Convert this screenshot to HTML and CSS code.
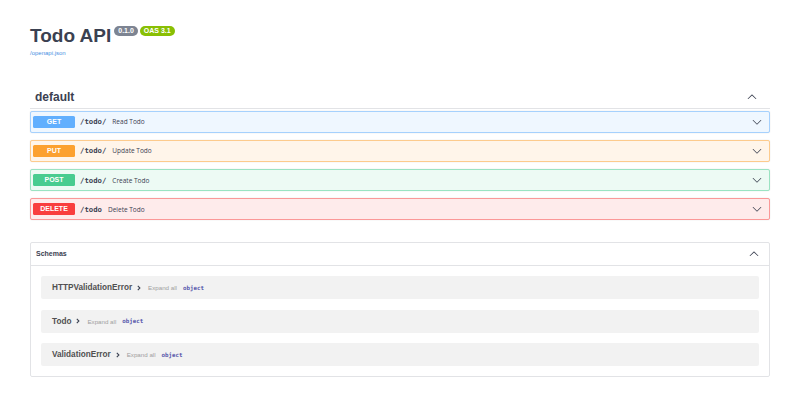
FILE: index.html
```html
<!DOCTYPE html>
<html>
<head>
<meta charset="utf-8">
<link rel="stylesheet" href="styles.css">
</head>
<body>
<div class="wrap">
  <div class="info">
    <div class="title-row">
      <h1 class="title">Todo API</h1>
      <span class="badge ver">0.1.0</span>
      <span class="badge oas">OAS 3.1</span>
    </div>
    <a class="link">/openapi.json</a>
  </div>

  <div class="tag">
    <h3 class="tag-name">default</h3>
    <svg class="chev-up" viewBox="0 0 20 20"><path d="M17.418 6.109c.272-.268.709-.268.979 0s.271.701 0 .969l-7.908 7.83c-.27.268-.707.268-.979 0l-7.908-7.83c-.27-.268-.27-.701 0-.969.271-.268.709-.268.979 0L10 13.25l7.418-7.141z" transform="rotate(180 10 10)"/></svg>
  </div>

  <div class="ops">
    <div class="op get"><span class="method">GET</span><span class="path">/todo/</span><span class="summary">Read Todo</span><svg class="chev" viewBox="0 0 20 20"><path d="M17.418 6.109c.272-.268.709-.268.979 0s.271.701 0 .969l-7.908 7.83c-.27.268-.707.268-.979 0l-7.908-7.83c-.27-.268-.27-.701 0-.969.271-.268.709-.268.979 0L10 13.25l7.418-7.141z"/></svg></div>
    <div class="op put"><span class="method">PUT</span><span class="path">/todo/</span><span class="summary">Update Todo</span><svg class="chev" viewBox="0 0 20 20"><path d="M17.418 6.109c.272-.268.709-.268.979 0s.271.701 0 .969l-7.908 7.83c-.27.268-.707.268-.979 0l-7.908-7.83c-.27-.268-.27-.701 0-.969.271-.268.709-.268.979 0L10 13.25l7.418-7.141z"/></svg></div>
    <div class="op post"><span class="method">POST</span><span class="path">/todo/</span><span class="summary">Create Todo</span><svg class="chev" viewBox="0 0 20 20"><path d="M17.418 6.109c.272-.268.709-.268.979 0s.271.701 0 .969l-7.908 7.83c-.27.268-.707.268-.979 0l-7.908-7.83c-.27-.268-.27-.701 0-.969.271-.268.709-.268.979 0L10 13.25l7.418-7.141z"/></svg></div>
    <div class="op delete"><span class="method">DELETE</span><span class="path">/todo</span><span class="summary">Delete Todo</span><svg class="chev" viewBox="0 0 20 20"><path d="M17.418 6.109c.272-.268.709-.268.979 0s.271.701 0 .969l-7.908 7.83c-.27.268-.707.268-.979 0l-7.908-7.83c-.27-.268-.27-.701 0-.969.271-.268.709-.268.979 0L10 13.25l7.418-7.141z"/></svg></div>
  </div>

  <section class="models">
    <div class="models-head">
      <h4 class="models-title">Schemas</h4>
      <svg class="chev-up" viewBox="0 0 20 20"><path d="M17.418 6.109c.272-.268.709-.268.979 0s.271.701 0 .969l-7.908 7.83c-.27.268-.707.268-.979 0l-7.908-7.83c-.27-.268-.27-.701 0-.969.271-.268.709-.268.979 0L10 13.25l7.418-7.141z" transform="rotate(180 10 10)"/></svg>
    </div>
    <div class="model"><span class="model-name">HTTPValidationError</span><svg class="mchev" viewBox="0 0 6 10"><path d="M1 1.5 L4.5 5 L1 8.5" /></svg><span class="expand">Expand all</span><span class="type">object</span></div>
    <div class="model"><span class="model-name">Todo</span><svg class="mchev" viewBox="0 0 6 10"><path d="M1 1.5 L4.5 5 L1 8.5" /></svg><span class="expand">Expand all</span><span class="type">object</span></div>
    <div class="model"><span class="model-name">ValidationError</span><svg class="mchev" viewBox="0 0 6 10"><path d="M1 1.5 L4.5 5 L1 8.5" /></svg><span class="expand">Expand all</span><span class="type">object</span></div>
  </section>
</div>
</body>
</html>
```

FILE: styles.css
```css
html, body {
  margin: 0;
  padding: 0;
  background: #fff;
}
body {
  font-family: "Liberation Sans", Arial, sans-serif;
  color: #3b4151;
}
.wrap {
  padding: 24px 30px 0;
}
.title-row {
  display: flex;
  align-items: flex-start;
}
.title {
  margin: 0;
  font-size: 19px;
  line-height: 23px;
  font-weight: bold;
  color: #3b4151;
}
.badge {
  display: inline-block;
  margin-top: 2px;
  height: 10px;
  line-height: 10px;
  padding: 0 4px;
  border-radius: 5px;
  color: #fff;
  font-size: 7px;
  font-weight: bold;
}
.ver {
  margin-left: 3px;
  background: #7d8492;
}
.oas {
  margin-left: 2px;
  background: #89bf04;
}
.link {
  display: block;
  margin-top: 2px;
  font-size: 6px;
  line-height: 8px;
  color: #4990e2;
}
.tag {
  display: flex;
  align-items: center;
  justify-content: space-between;
  margin-top: 26px;
  padding: 5px 13px 2px 5px;
  border-bottom: 1px solid #e2e3e6;
  margin-bottom: 1.5px;
}
.tag-name {
  margin: 0;
  font-size: 12px;
  line-height: 18px;
  font-weight: bold;
  color: #3b4151;
}
.chev-up {
  width: 10px;
  height: 10px;
  fill: #3b4151;
}
.op {
  display: flex;
  align-items: center;
  box-sizing: border-box;
  height: 22px;
  border: 1px solid;
  border-radius: 2px;
  padding: 0 7px 0 2px;
  margin-bottom: 7.3px;
  box-shadow: 0 0 1.5px rgba(0, 0, 0, .12);
}
.method {
  width: 42px;
  height: 12px;
  line-height: 12px;
  text-align: center;
  border-radius: 1.5px;
  color: #fff;
  font-size: 7px;
  font-weight: bold;
}
.path {
  margin-left: 5px;
  font-family: "DejaVu Sans Mono", monospace;
  font-weight: bold;
  font-size: 7.3px;
  color: #3b4151;
}
.summary {
  flex: 1;
  margin-left: 6px;
  font-family: "Open Sans", sans-serif;
  font-size: 6.5px;
  color: #3b4151;
}
.chev {
  width: 10px;
  height: 10px;
  fill: #3b4151;
}
.get { background: #eff7ff; border-color: #a6d1fd; }
.get .method { background: #61affe; }
.put { background: #fff5ea; border-color: #fdcb8d; }
.put .method { background: #fca130; }
.post { background: #edfaf4; border-color: #9be3c2; }
.post .method { background: #49cc90; }
.delete { background: #feebeb; border-color: #fb9898; }
.delete .method { background: #f93e3e; }

.models {
  margin-top: 21.5px;
  border: 1px solid #e2e3e6;
  border-radius: 2px;
  padding-bottom: 10px;
}
.models-head {
  display: flex;
  align-items: center;
  justify-content: space-between;
  height: 22px;
  padding: 0 10px 0 5px;
  border-bottom: 1px solid #e2e3e6;
  margin-bottom: 10.5px;
}
.models-title {
  margin: 0;
  font-size: 7px;
  font-weight: bold;
  color: #3b4151;
}
.model {
  display: flex;
  align-items: center;
  height: 23px;
  margin: 0 10px 10.5px;
  padding: 0 11px;
  background: #f2f2f2;
  border-radius: 2px;
}
.model:last-child {
  margin-bottom: 0;
}
.model-name {
  font-size: 8.2px;
  font-weight: bold;
  color: #505050;
}
.mchev {
  width: 4px;
  height: 6px;
  margin-left: 5px;
  fill: none;
  stroke: #3b4151;
  stroke-width: 1.8;
}
.expand {
  margin-left: 7px;
  font-size: 6.2px;
  color: #a0a0a0;
}
.type {
  margin-left: 6px;
  font-family: "DejaVu Sans Mono", monospace;
  font-size: 5.8px;
  font-weight: bold;
  color: #55a;
}
```
